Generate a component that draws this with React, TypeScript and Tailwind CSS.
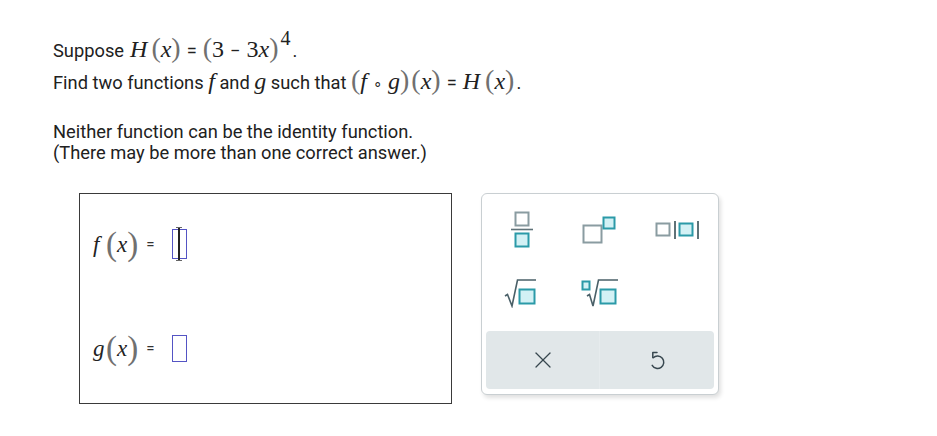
import { X } from "lucide-react";

const serif = "font-['Liberation_Serif',serif]";

const Paren = ({ c }: { c: string }) => (
  <span className={`${serif} text-[28px] leading-none text-[#707070] not-italic`}>{c}</span>
);

const Var = ({ v }: { v: string }) => (
  <span className={`${serif} italic text-[24px] leading-none`}>{v}</span>
);

const Num = ({ v }: { v: string }) => (
  <span className={`${serif} text-[24px] leading-none`}>{v}</span>
);

const Op = ({ v, cls = "" }: { v: string; cls?: string }) => (
  <span className={`inline-block mx-[6px] leading-none ${cls}`}>{v}</span>
);

const FractionIcon = () => (
  <svg width="24" height="38" viewBox="0 0 24 38">
    <rect x="4.5" y="1.5" width="13" height="13" fill="white" stroke="#8a9ca1" strokeWidth="2" />
    <line x1="0" y1="18.5" x2="22" y2="18.5" stroke="#5f7278" strokeWidth="1.6" />
    <rect x="4.5" y="22.5" width="13" height="13" fill="#d3f1f5" stroke="#2b9aa8" strokeWidth="2" />
  </svg>
);

const SuperIcon = () => (
  <svg width="36" height="30" viewBox="0 0 36 30">
    <rect x="1.5" y="10.5" width="18" height="17" fill="white" stroke="#8a9ca1" strokeWidth="2" />
    <rect x="21.5" y="2.5" width="11" height="11" fill="#d3f1f5" stroke="#2b9aa8" strokeWidth="2" />
  </svg>
);

const AbsIcon = () => (
  <svg width="45" height="20" viewBox="0 0 45 20">
    <rect x="1.5" y="3.5" width="13" height="12" fill="white" stroke="#8a9ca1" strokeWidth="2" />
    <line x1="20" y1="1" x2="20" y2="19" stroke="#5f7278" strokeWidth="2" />
    <rect x="24.5" y="3.5" width="13" height="12" fill="#d3f1f5" stroke="#2b9aa8" strokeWidth="2" />
    <line x1="43" y1="1" x2="43" y2="19" stroke="#5f7278" strokeWidth="2" />
  </svg>
);

const SqrtIcon = () => (
  <svg width="33" height="30" viewBox="0 0 33 30">
    <path d="M1 18 L3.5 16.5 L8 28 L13.5 2 L32 2" fill="none" stroke="#4a6068" strokeWidth="1.6" />
    <rect x="15.5" y="11.5" width="15" height="14" fill="#d3f1f5" stroke="#2b9aa8" strokeWidth="2" />
  </svg>
);

const NthRootIcon = () => (
  <svg width="38" height="28" viewBox="0 0 38 28">
    <rect x="1.5" y="2.5" width="7" height="8" fill="#d3f1f5" stroke="#2b9aa8" strokeWidth="2" />
    <path d="M6 17 L8.5 15.5 L12 27 L17.5 1 L37 1" fill="none" stroke="#4a6068" strokeWidth="1.6" />
    <rect x="19.5" y="10.5" width="15" height="14" fill="#d3f1f5" stroke="#2b9aa8" strokeWidth="2" />
  </svg>
);

// undo arrow, "5"-shaped like the keypad glyph
const UndoIcon = () => (
  <svg width="22" height="24" viewBox="0 0 22 24" fill="none" stroke="#37474f" strokeWidth="1.5" strokeLinecap="round" strokeLinejoin="round">
    <path d="M11 4.5 H6.8 V9.6" />
    <path d="M7.2 9.8 A6.2 6.2 0 1 1 6.2 17.3" />
  </svg>
);

const Row = ({ name, cursor }: { name: string; cursor?: boolean }) => (
  <div className="flex h-[40px] items-center">
    <span className={`${serif} italic text-[23px] leading-none w-[11px]`}>{name}</span>
    <span className={`${serif} text-[33px] leading-none text-[#707070] ml-[2px]`}>(</span>
    <span className={`${serif} italic text-[23px] leading-none`}>x</span>
    <span className={`${serif} text-[33px] leading-none text-[#707070]`}>)</span>
    <span className="ml-[8px] text-[15px] leading-none text-[#333]">=</span>
    <div
      className={`relative ml-[18px] w-[15px] border-[1.5px] border-[#5454c4] ${
        cursor ? "h-[30px]" : "h-[27px]"
      }`}
    >
      {cursor && (
        <>
          <div className="absolute left-[5px] top-[-3px] h-[33px] w-[1.5px] bg-[#222]" />
          <div className="absolute left-[3px] top-[-3px] h-[1px] w-[6px] bg-[#666]" />
          <div className="absolute left-[3px] bottom-[-3px] h-[1px] w-[6px] bg-[#666]" />
        </>
      )}
    </div>
  </div>
);

export default function App() {
  return (
    <div className="min-h-screen bg-white font-['Roboto',sans-serif] text-[#212121]">
      <div className="pl-[53px] pt-[34px]">
        <div className="h-[32px] leading-[32px] text-[18.3px] whitespace-nowrap">
          Suppose
          <span className="ml-[6px]" />
          <Var v="H" />
          <span className="ml-[4px]" />
          <Paren c="(" />
          <Var v="x" />
          <Paren c=")" />
          <Op v="=" cls="mx-[3px]" />
          <Paren c="(" />
          <Num v="3" />
          <Op v="−" cls="mx-[4px]" />
          <Num v="3" />
          <Var v="x" />
          <Paren c=")" />
          <span className={`${serif} relative -top-[12px] text-[20px] leading-none ml-[2px]`}>4</span>
          <span className="ml-[2px]">.</span>
        </div>
        <div className="h-[32px] leading-[32px] text-[18.3px] whitespace-nowrap">
          Find two functions <Var v="f" /> and <Var v="g" /> such that{" "}
          <Paren c="(" />
          <Var v="f" />
          <Op v="∘" cls="text-[15px] mx-[5px]" />
          <Var v="g" />
          <Paren c=")" />
          <span className="ml-[2px]" />
          <Paren c="(" />
          <Var v="x" />
          <Paren c=")" />
          <Op v="=" cls="mx-[5px]" />
          <Var v="H" />
          <span className="ml-[5px]" />
          <Paren c="(" />
          <Var v="x" />
          <Paren c=")" />
          <span className="ml-[2px]">.</span>
        </div>
        <div className="mt-[23px] text-[18.3px] leading-[21px]">
          <div>Neither function can be the identity function.</div>
          <div>(There may be more than one correct answer.)</div>
        </div>
      </div>

      <div className="ml-[79px] mt-[30px] flex items-start gap-[29px]">
        <div className="h-[211px] w-[373px] border border-[#3a3a3a] pl-[13px] pt-[30px] text-[#222]">
          <Row name="f" cursor />
          <div className="h-[64px]" />
          <Row name="g" />
        </div>

        <div className="h-[202px] w-[238px] rounded-[6px] border border-[#c9cfd2] bg-white px-[4px] pt-[10px] shadow-[2px_3px_4px_rgba(0,0,0,0.12)]">
          <div className="grid h-[52px] grid-cols-3">
            <div className="flex items-center pl-[25px]">
              <FractionIcon />
            </div>
            <div className="flex items-center pl-[20px]">
              <SuperIcon />
            </div>
            <div className="flex items-center pl-[17px]">
              <AbsIcon />
            </div>
          </div>
          <div className="grid h-[74px] grid-cols-3">
            <div className="flex items-center pl-[18px]">
              <SqrtIcon />
            </div>
            <div className="flex items-center pl-[19px]">
              <NthRootIcon />
            </div>
            <div />
          </div>
          <div className="mt-[1px] grid h-[58px] grid-cols-2 rounded-[4px] bg-[#e1e7e9]">
            <div className="flex items-center justify-center border-r border-[#e6ebed]">
              <X size={28} strokeWidth={1.1} color="#37474f" />
            </div>
            <div className="flex items-center justify-center">
              <UndoIcon />
            </div>
          </div>
        </div>
      </div>
    </div>
  );
}
